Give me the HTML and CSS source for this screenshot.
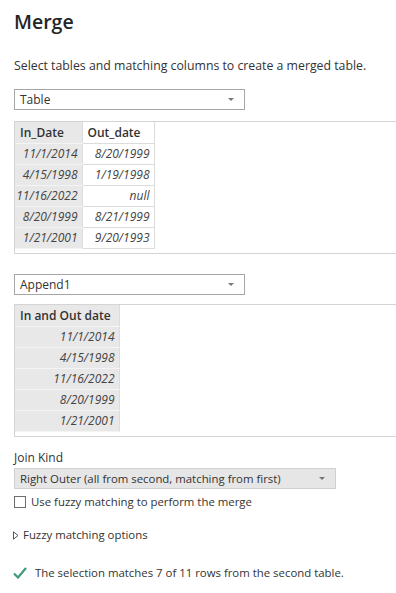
FILE: index.html
```html
<!DOCTYPE html>
<html lang="en">
<head>
    <meta charset="UTF-8">
    <meta name="viewport" content="width=device-width, initial-scale=1.0">
    <title>Merge</title>
    <link rel="stylesheet" href="styles.css">
</head>
<body>
    <div class="dialog">
        <h1>Merge</h1>
        <p class="intro">Select tables and matching columns to create a merged table.</p>

        <div class="select">
            <span>Table</span>
            <span class="caret"></span>
        </div>

        <div class="preview first">
            <table class="grid">
                <tr>
                    <th class="key c66">In_Date</th>
                    <th class="c71">Out_date</th>
                </tr>
                <tr><td class="key">11/1/2014</td><td>8/20/1999</td></tr>
                <tr><td class="key">4/15/1998</td><td>1/19/1998</td></tr>
                <tr><td class="key">11/16/2022</td><td>null</td></tr>
                <tr><td class="key">8/20/1999</td><td>8/21/1999</td></tr>
                <tr><td class="key">1/21/2001</td><td>9/20/1993</td></tr>
            </table>
        </div>

        <div class="select">
            <span>Append1</span>
            <span class="caret"></span>
        </div>

        <div class="preview second">
            <table class="grid">
                <tr><th class="key c103">In and Out date</th></tr>
                <tr><td class="key">11/1/2014</td></tr>
                <tr><td class="key">4/15/1998</td></tr>
                <tr><td class="key">11/16/2022</td></tr>
                <tr><td class="key">8/20/1999</td></tr>
                <tr><td class="key">1/21/2001</td></tr>
            </table>
        </div>

        <div class="label">Join Kind</div>
        <div class="select join">
            <span>Right Outer (all from second, matching from first)</span>
            <span class="caret"></span>
        </div>

        <label class="check-row">
            <span class="box"></span>
            <span>Use fuzzy matching to perform the merge</span>
        </label>

        <div class="expander">
            <svg width="6" height="9" viewBox="0 0 6 9"><path d="M0.5 0.8 L5 4.5 L0.5 8.2 Z" fill="none" stroke="#555" stroke-width="1"/></svg>
            <span>Fuzzy matching options</span>
        </div>

        <div class="status">
            <svg width="14" height="12" viewBox="0 0 14 12"><path d="M1 6.5 L5 10.5 L13 1" fill="none" stroke="#3f9a78" stroke-width="2.2"/></svg>
            <span>The selection matches 7 of 11 rows from the second table.</span>
        </div>
    </div>
</body>
</html>
```

FILE: styles.css
```css
body {
    margin: 0;
    background-color: #fff;
    font-family: "Open Sans", "Noto Sans", Arial, sans-serif;
    color: #333;
    overflow: hidden;
}
.dialog {
    padding: 0 0 0 14px;
}
h1 {
    margin: 0;
    padding-top: 6px;
    font-size: 19.5px;
    font-weight: 600;
    line-height: 31px;
    color: #252525;
}
.intro {
    margin: 21px 0 0 0;
    font-size: 12.3px;
    line-height: 16px;
    color: #333;
}
.select {
    box-sizing: border-box;
    width: 231px;
    height: 21px;
    margin-top: 15px;
    border: 1px solid #a6a6a6;
    padding: 0 10px 0 5px;
    display: flex;
    align-items: center;
    justify-content: space-between;
    font-size: 12px;
    color: #333;
}
.caret {
    width: 0;
    height: 0;
    border-left: 3px solid transparent;
    border-right: 3px solid transparent;
    border-top: 3px solid #777;
}
.preview {
    height: 131px;
    border-top: 1px solid #d4d4d4;
    border-left: 1px solid #d4d4d4;
    border-bottom: 1px solid #d4d4d4;
    margin-top: 11px;
}
.preview.first {
    margin-bottom: 20px;
}
.preview.second {
    margin-top: 9px;
    margin-bottom: 13px;
}
.grid {
    border-collapse: collapse;
    font-size: 12px;
}
.grid th,
.grid td {
    box-sizing: border-box;
    height: 21px;
    padding: 0 4px 0 1px;
    border-right: 1px solid #dcdcdc;
    border-bottom: 1px solid #dcdcdc;
    white-space: nowrap;
}
.grid .c66 {
    width: 67px;
    min-width: 67px;
    max-width: 67px;
}
.grid .c71 {
    width: 72px;
    min-width: 72px;
    max-width: 72px;
}
.grid .c103 {
    width: 104px;
    min-width: 104px;
    max-width: 104px;
}
.grid th {
    padding-left: 5px;
    text-align: left;
    font-weight: 600;
    color: #333;
}
.grid td {
    text-align: right;
    font-style: italic;
    color: #444;
}
.grid .key {
    background-color: #e8e8e8;
    border-bottom-color: #f4f4f4;
}
.label {
    margin-top: 13px;
    font-size: 12px;
    line-height: 16px;
    color: #333;
}
.select.join {
    width: 322px;
    margin-top: 2px;
    background-color: #e6e6e6;
    border-color: #d0d0d0;
    font-size: 11.4px;
}
.check-row {
    display: flex;
    align-items: center;
    gap: 5px;
    margin-top: 5px;
    font-size: 11.4px;
    line-height: 16px;
}
.box {
    box-sizing: border-box;
    width: 12px;
    height: 12px;
    border: 1.5px solid #6e6e6e;
}
.expander {
    display: flex;
    align-items: center;
    gap: 4px;
    margin-top: 17px;
    margin-left: -1px;
    font-size: 11.4px;
    line-height: 16px;
}
.status {
    display: flex;
    align-items: center;
    gap: 8px;
    margin-top: 22px;
    margin-left: -1px;
    font-size: 11.4px;
    line-height: 16px;
}
```
